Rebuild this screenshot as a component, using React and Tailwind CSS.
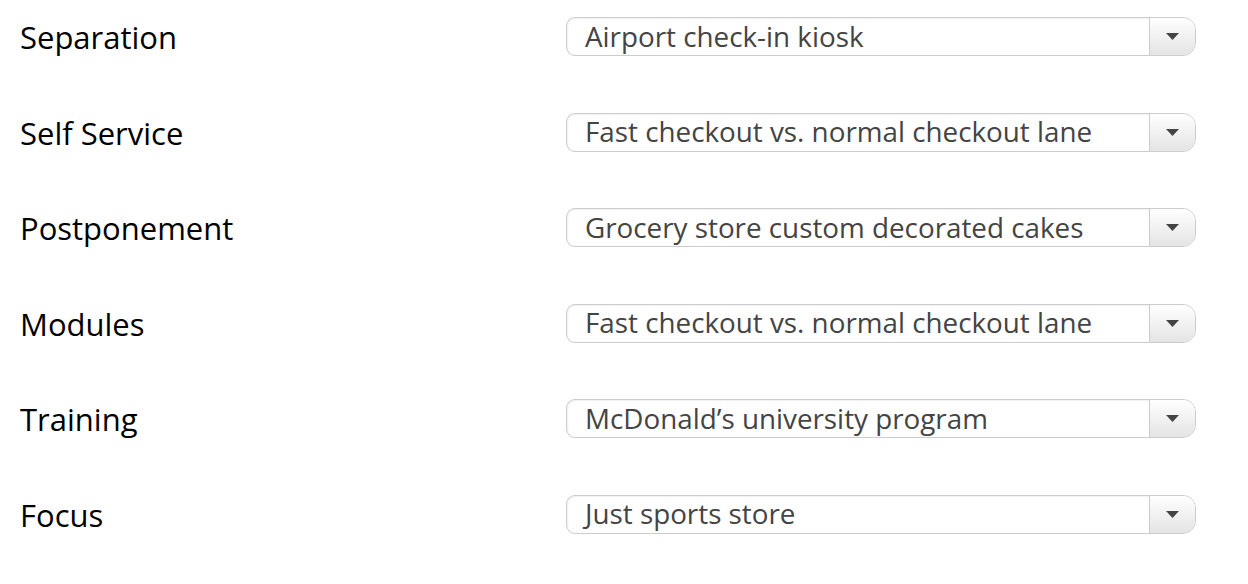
import React from "react";

const rows = [
  { label: "Separation", value: "Airport check-in kiosk" },
  { label: "Self Service", value: "Fast checkout vs. normal checkout lane" },
  { label: "Postponement", value: "Grocery store custom decorated cakes" },
  { label: "Modules", value: "Fast checkout vs. normal checkout lane" },
  { label: "Training", value: "McDonald\u2019s university program" },
  { label: "Focus", value: "Just sports store" },
];

function Select({ value }) {
  return (
    <div className="flex h-[39px] w-[630px] items-stretch rounded-l-[9px] rounded-r-[13px] border border-[#cccccc] bg-white shadow-[inset_1px_1px_2px_rgba(0,0,0,0.06)]">
      <div className="flex flex-1 items-center pl-[18px] text-[27.8px] text-[#444444] leading-none">
        <span>{value}</span>
      </div>
      <div className="flex w-[46px] items-center justify-center rounded-r-[12px] border-l border-[#cccccc] bg-gradient-to-b from-white to-[#e4e4e4]">
        <svg width="13" height="7" viewBox="0 0 13 7">
          <path d="M0 0 L13 0 L6.5 7 Z" fill="#444444" />
        </svg>
      </div>
    </div>
  );
}

export default function App() {
  return (
    <div
      className="flex flex-col gap-[56.5px] bg-white pt-[17px] pl-[20px]"
      style={{ fontFamily: '"Open Sans", sans-serif' }}
    >
      {rows.map((row, index) => (
        <div key={index} className="flex items-center">
          <div className="relative top-[1px] w-[546px] text-[31px] text-black leading-none">
            {row.label}
          </div>
          <Select value={row.value} />
        </div>
      ))}
    </div>
  );
}
